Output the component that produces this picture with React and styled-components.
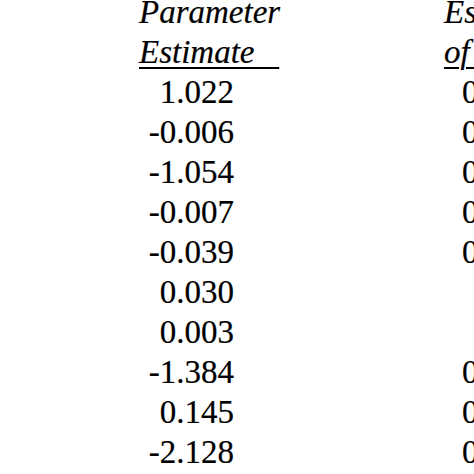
import React from 'react';
import styled, { createGlobalStyle } from 'styled-components';

const GlobalStyle = createGlobalStyle`
    html, body{
        margin: 0;
        padding: 0;
        background: #fff;
    }
    body{
        font-family: "Liberation Serif", "Times New Roman", serif;
        color: #000;
    }
`;

const Page = styled.div`
    width: 474px;
    height: 474px;
    overflow: hidden;
    background: #fff;
`;

const Table = styled.div`
    display: grid;
    grid-template-columns: 305px 240px;
    padding-left: 139px;
    margin-top: -8px;
    font-size: 33px;
    line-height: 40px;
    white-space: nowrap;
    -webkit-text-stroke: 0.2px #000;
`;

const Head = styled.div`
    font-style: italic;
    text-decoration: ${p => (p.$underline ? 'underline' : 'none')};
    text-decoration-thickness: 1.5px;
    text-underline-offset: 4px;
    white-space: pre;
`;

const Num = styled.div`
    width: ${p => (p.$second ? 'auto' : '95px')};
    text-align: ${p => (p.$second ? 'left' : 'right')};
    padding-left: ${p => (p.$second ? '18px' : '0')};
`;

const rows = [
    ['1.022', '0.108'],
    ['-0.006', '0.002'],
    ['-1.054', '0.212'],
    ['-0.007', '0.003'],
    ['-0.039', '0.019'],
    ['0.030', ''],
    ['0.003', ''],
    ['-1.384', '0.297'],
    ['0.145', '0.061'],
    ['-2.128', '0.403'],
];

const App = () => {
    return (
        <Page>
            <GlobalStyle />
            <Table>
                <Head>Parameter</Head>
                <Head>Estimated Standard Error</Head>
                <Head $underline>{'Estimate\u00a0\u00a0\u00a0'}</Head>
                <Head $underline>of Estimate</Head>
                {rows.map(([est, se], i) => (
                    <React.Fragment key={i}>
                        <Num>{est}</Num>
                        <Num $second>{se || '\u00a0'}</Num>
                    </React.Fragment>
                ))}
            </Table>
        </Page>
    )
};

export default App;
